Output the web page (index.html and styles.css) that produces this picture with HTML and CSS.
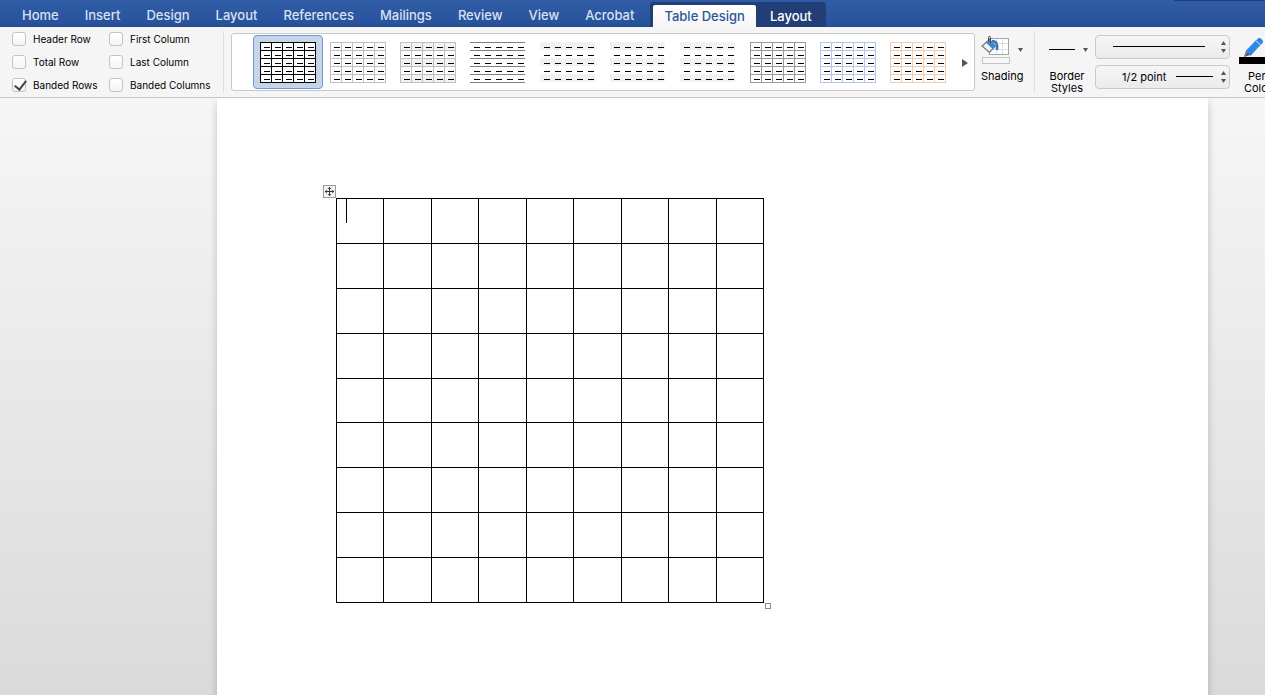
FILE: index.html
```html
<!DOCTYPE html>
<html lang="en">

<head>
  <meta charset="utf-8">
  <meta name="viewport" content="width=device-width,initial-scale=1.0">
  <title>Document - Table Design</title>
  <link rel="stylesheet" href="styles.css">
</head>

<body>

  <!-- shared shapes for the table style thumbnails -->
  <svg class="defs" width="0" height="0" aria-hidden="true">
    <defs>
      <pattern id="dash" width="11" height="8" patternUnits="userSpaceOnUse">
        <rect x="4" y="5" width="6" height="1" fill="#000" />
      </pattern>
      <g id="dashes"><rect width="55" height="40" fill="url(#dash)" /></g>
      <path id="rows" fill="none" stroke="currentColor" d="M0 .5h56M0 8.5h56M0 16.5h56M0 24.5h56M0 32.5h56M0 40.5h56" />
      <path id="cols" fill="none" stroke="currentColor" d="M.5 0v41M11.5 0v41M22.5 0v41M33.5 0v41M44.5 0v41M55.5 0v41" />
      <path id="bands" fill="#f2f2f2" d="M0 0h55v8H0zM0 16h55v8H0zM0 32h55v8H0z" />
    </defs>
  </svg>

  <nav class="tabs">
    <a href="#">Home</a>
    <a href="#">Insert</a>
    <a href="#">Design</a>
    <a href="#">Layout</a>
    <a href="#">References</a>
    <a href="#">Mailings</a>
    <a href="#">Review</a>
    <a href="#">View</a>
    <a href="#">Acrobat</a>
    <div class="context-tabs">
      <a href="#" class="active">Table Design</a>
      <a href="#">Layout</a>
    </div>
  </nav>

  <div class="ribbon">
    <div class="options">
      <label><input type="checkbox">Header Row</label>
      <label><input type="checkbox">First Column</label>
      <label><input type="checkbox">Total Row</label>
      <label><input type="checkbox">Last Column</label>
      <label><input type="checkbox" checked>Banded Rows</label>
      <label><input type="checkbox">Banded Columns</label>
    </div>
    <span class="separator"></span>

    <div class="gallery">
      <button class="thumb selected" aria-label="Table Grid"><svg width="56" height="41"><rect width="56" height="41" fill="#fff" /><use href="#rows" /><use href="#cols" /><use href="#dashes" /></svg></button>
      <button class="thumb light" aria-label="Table Grid Light"><svg width="56" height="41"><use href="#rows" /><use href="#cols" /><use href="#dashes" /></svg></button>
      <button class="thumb light" aria-label="Plain Table 1"><svg width="56" height="41"><use href="#bands" /><use href="#rows" /><use href="#cols" /><use href="#dashes" /></svg></button>
      <button class="thumb gray" aria-label="Plain Table 2"><svg width="55" height="41"><use href="#rows" /><use href="#dashes" /></svg></button>
      <button class="thumb" aria-label="Plain Table 3"><svg width="55" height="41"><use href="#bands" /><use href="#dashes" /></svg></button>
      <button class="thumb" aria-label="Plain Table 4"><svg width="55" height="41"><use href="#bands" /><use href="#dashes" /></svg></button>
      <button class="thumb" aria-label="Plain Table 5"><svg width="55" height="41"><use href="#bands" /><use href="#dashes" /></svg></button>
      <button class="thumb dark" aria-label="Grid Table 1 Light"><svg width="56" height="41"><use href="#rows" /><use href="#cols" /><use href="#dashes" /></svg></button>
      <button class="thumb blue" aria-label="Grid Table 1 Light Accent 1"><svg width="56" height="41"><use href="#rows" /><use href="#cols" /><use href="#dashes" /></svg></button>
      <button class="thumb orange" aria-label="Grid Table 1 Light Accent 2"><svg width="56" height="41"><use href="#rows" /><use href="#cols" /><use href="#dashes" /></svg></button>
      <button class="more" aria-label="More styles"><svg width="6" height="8"><path d="M0 0l6 4-6 4z" fill="#555" /></svg></button>
    </div>

    <button class="tool shading">
      <span class="icon">
        <svg width="42" height="30" viewBox="0 0 42 30">
          <rect x="8.500" y="3.500" width="19" height="16" fill="#fff" stroke="#a5a5a5" />
          <path d="M9 8.500h18M9 14.500h18M15.500 4v15M21.500 4v15" stroke="#ddd" />
          <path d="M1 11L8.500 4.500l6 6.500-6 6.500z" fill="#f1f1f1" stroke="#777" stroke-width="1.200" />
          <path d="M5 7.500L11.500 14l2.500-3-5.500-6z" fill="#3d86d3" />
          <path d="M11 6c4 0 6 3 5 9" fill="none" stroke="#2a7bd0" stroke-width="2.500" />
          <path d="M7.500 6V2.500Q8.500-.5 9.500 2.500V8" fill="none" stroke="#444" />
          <rect x="1.500" y="22.500" width="27" height="6" fill="#f7f7f7" stroke="#c4c4c4" />
          <path d="M37 13h5l-2.500 4z" fill="#555" />
        </svg>
      </span>
      Shading
    </button>
    <span class="separator"></span>

    <button class="tool border-styles">
      <span class="icon">
        <svg width="40" height="30" viewBox="0 0 40 30">
          <path d="M0 14.500h26" stroke="#000" />
          <path d="M34 13h5l-2.500 4z" fill="#555" />
        </svg>
      </span>
      <span class="caption">Border<br>Styles</span>
    </button>

    <div class="pickers">
      <div class="picker">
        <select aria-label="Line style">
          <option label=" " value="single"></option>
        </select>
        <svg class="line wide" width="92" height="1"><rect width="92" height="1" /></svg>
        <svg class="arrows" width="5" height="12"><path d="M0 4l2.500-4L5 4zM0 8l2.500 4L5 8z" fill="#555" /></svg>
      </div>
      <div class="picker">
        <select aria-label="Line weight">
          <option>1/2 point</option>
        </select>
        <svg class="line" width="37" height="1"><rect width="37" height="1" /></svg>
        <svg class="arrows" width="5" height="12"><path d="M0 4l2.500-4L5 4zM0 8l2.500 4L5 8z" fill="#555" /></svg>
      </div>
    </div>

    <button class="tool pen">
      <span class="icon">
        <svg width="38" height="30" viewBox="0 0 38 30">
          <path d="M5 22l2-6 4 4z" fill="#555" />
          <path d="M7 16l10-10.500 4.500 4L11.500 20.500z" fill="#2e86e8" stroke="#2371cf" stroke-width=".6" />
          <path d="M18 4.500q2-2.500 4.500-.5t.8 4.500l-1 1-5-4z" fill="#2e86e8" />
          <path d="M17 6l4.500 4" stroke="#b9d8fa" />
          <path d="M5 22l2-6 1.500 1.500L6.500 21z" fill="#888" />
          <rect y="22" width="38" height="7" />
        </svg>
      </span>
      <span class="caption">Pen<br>Color</span>
    </button>
  </div>

  <main class="workspace">
    <div class="page">
      <div class="table-wrap">
        <button class="move" aria-label="Move table"><svg width="11" height="11"><path d="M1 5.500h9M5.500 1v9" stroke="#333" /><path d="M1 5.500l2-2v4zM10 5.500l-2-2v4zM5.500 1l-2 2h4zM5.500 10l-2-2h4z" fill="#444" /></svg></button>
        <table>
          <tr><td><span class="caret"></span></td><td></td><td></td><td></td><td></td><td></td><td></td><td></td><td></td></tr>
          <tr><td></td><td></td><td></td><td></td><td></td><td></td><td></td><td></td><td></td></tr>
          <tr><td></td><td></td><td></td><td></td><td></td><td></td><td></td><td></td><td></td></tr>
          <tr><td></td><td></td><td></td><td></td><td></td><td></td><td></td><td></td><td></td></tr>
          <tr><td></td><td></td><td></td><td></td><td></td><td></td><td></td><td></td><td></td></tr>
          <tr><td></td><td></td><td></td><td></td><td></td><td></td><td></td><td></td><td></td></tr>
          <tr><td></td><td></td><td></td><td></td><td></td><td></td><td></td><td></td><td></td></tr>
          <tr><td></td><td></td><td></td><td></td><td></td><td></td><td></td><td></td><td></td></tr>
          <tr><td></td><td></td><td></td><td></td><td></td><td></td><td></td><td></td><td></td></tr>
        </table>
        <span class="resize"></span>
      </div>
    </div>
  </main>

</body>

</html>
```
FILE: styles.css
```css
* {
  box-sizing: border-box;
}

body {
  margin: 0;
  min-height: 100vh;
  display: flex;
  flex-direction: column;
  overflow: hidden;
  font-family: Inter, "Liberation Sans", sans-serif;
  font-size: 11px;
  color: #000;
}

button,
select {
  font: inherit;
  color: inherit;
  padding: 0;
  border: none;
  background: none;
}

svg {
  display: block;
}

.defs {
  position: absolute;
}

/* tab bar */
.tabs {
  display: flex;
  align-items: flex-end;
  gap: 26px;
  height: 27px;
  padding-left: 22px;
  background: linear-gradient(#234078, #234078) top right / 91px 1px no-repeat, linear-gradient(#315ca6, #27519b);
  border-bottom: 1px solid #234a8c;
  font-size: 13px;
  font-weight: 500;
}

.tabs a {
  color: #d8e1f1;
  line-height: 22px;
  text-decoration: none;
  white-space: nowrap;
}

.context-tabs {
  display: flex;
  height: 25px;
  margin: 0 0 -1px -10px;
  padding: 3px 0 0 3px;
  background: #213f76;
  border-radius: 4px 4px 0 0;
}

.context-tabs a {
  color: #fff;
  padding: 0 14px;
}

.context-tabs .active {
  padding: 0 11px;
  background: linear-gradient(#fff, #f6f6f6);
  color: #2b579a;
  border-radius: 2px 2px 0 0;
}

/* ribbon */
.ribbon {
  display: flex;
  height: 71px;
  background: #f5f5f5;
  border-bottom: 1px solid #c6c6c6;
}

.ribbon > * {
  flex: none;
}

.separator {
  width: 1px;
  height: 62px;
  margin-top: 4px;
  background: #dedede;
}

.options {
  display: grid;
  grid-template-columns: 97px 102px;
  grid-auto-rows: 23px;
  align-content: center;
  width: 223px;
  padding-left: 12px;
  font-size: 10px;
}

.options label {
  display: flex;
  align-items: center;
  gap: 7px;
  white-space: nowrap;
}

.options input {
  appearance: none;
  flex: none;
  width: 14px;
  height: 14px;
  margin: 0;
  background: linear-gradient(#fff, #f4f4f4);
  border: 1px solid #c3c3c3;
  border-radius: 3px;
}

.options input:checked::after {
  content: "";
  display: block;
  width: 5px;
  height: 10px;
  margin: -1px 0 0 4px;
  border: solid #444;
  border-width: 0 2px 2px 0;
  transform: rotate(38deg);
}

.gallery {
  display: flex;
  align-items: flex-start;
  height: 58px;
  margin: 6px 0 0 7px;
  padding: 1px 1px 0 21px;
  background: #fff;
  border: 1px solid #c8c8c8;
  border-radius: 3px;
}

.thumb {
  width: 70px;
  height: 54px;
  padding: 0 6px;
  border: 1px solid transparent;
  border-radius: 4px;
}

.thumb.selected {
  background: #c7d5ea;
  border-color: #7098d0;
}

.light {
  color: #bfbfbf;
}

.gray {
  color: #7f7f7f;
}

.dark {
  color: #999;
}

.blue {
  color: #b4c6e7;
}

.orange {
  color: #f7caac;
}

.more {
  align-self: center;
  width: 20px;
  padding-left: 9px;
}

.tool {
  display: flex;
  flex-direction: column;
  height: 60px;
  margin-top: 8px;
  line-height: 12px;
  text-align: left;
}

.tool .icon {
  flex: none;
  height: 35px;
}

.caption {
  text-align: center;
}

.shading {
  width: 53px;
  margin-left: 6px;
}

.border-styles {
  width: 60px;
  padding-left: 14px;
}

.border-styles .caption {
  width: 36px;
}

.pickers {
  display: flex;
  flex-direction: column;
  gap: 6px;
  margin-top: 8px;
}

.picker {
  position: relative;
  width: 135px;
}

.picker select {
  appearance: none;
  display: block;
  width: 100%;
  height: 24px;
  padding-left: 26px;
  background: linear-gradient(#f6f6f6, #ebebeb);
  border: 1px solid #c9c9c9;
  border-radius: 4px;
}

.line,
.arrows {
  position: absolute;
  top: 11px;
  right: 17px;
  pointer-events: none;
}

.line.wide {
  right: 25px;
}

.arrows {
  top: 6px;
  right: 4px;
}

.pen {
  width: 38px;
  margin-left: 9px;
}

/* document */
.workspace {
  flex: 1;
  display: flex;
  padding: 0 57px 0 217px;
  background: linear-gradient(#f6f6f6, #dadada);
}

.page {
  flex: 1;
  padding: 100px 119px;
  background: #fff;
  box-shadow: 0 4px 8px rgba(0, 0, 0, 0.2);
  clip-path: inset(0 -12px);
}

.table-wrap {
  position: relative;
  width: 428px;
}

table {
  width: 100%;
  height: 405px;
  table-layout: fixed;
  border-collapse: collapse;
}

td {
  padding: 0 0 0 9px;
  border: 1px solid #000;
  vertical-align: top;
}

tr {
  height: 44px;
}

.caret {
  display: block;
  width: 1px;
  height: 24px;
  background: #000;
}

.move {
  position: absolute;
  top: -13px;
  left: -13px;
  width: 13px;
  height: 13px;
  background: #f4f4f4;
  border: 1px solid #999;
}

.resize {
  position: absolute;
  right: -7px;
  bottom: -6px;
  width: 6px;
  height: 6px;
  background: #fff;
  border: 1px solid #888;
}
```
